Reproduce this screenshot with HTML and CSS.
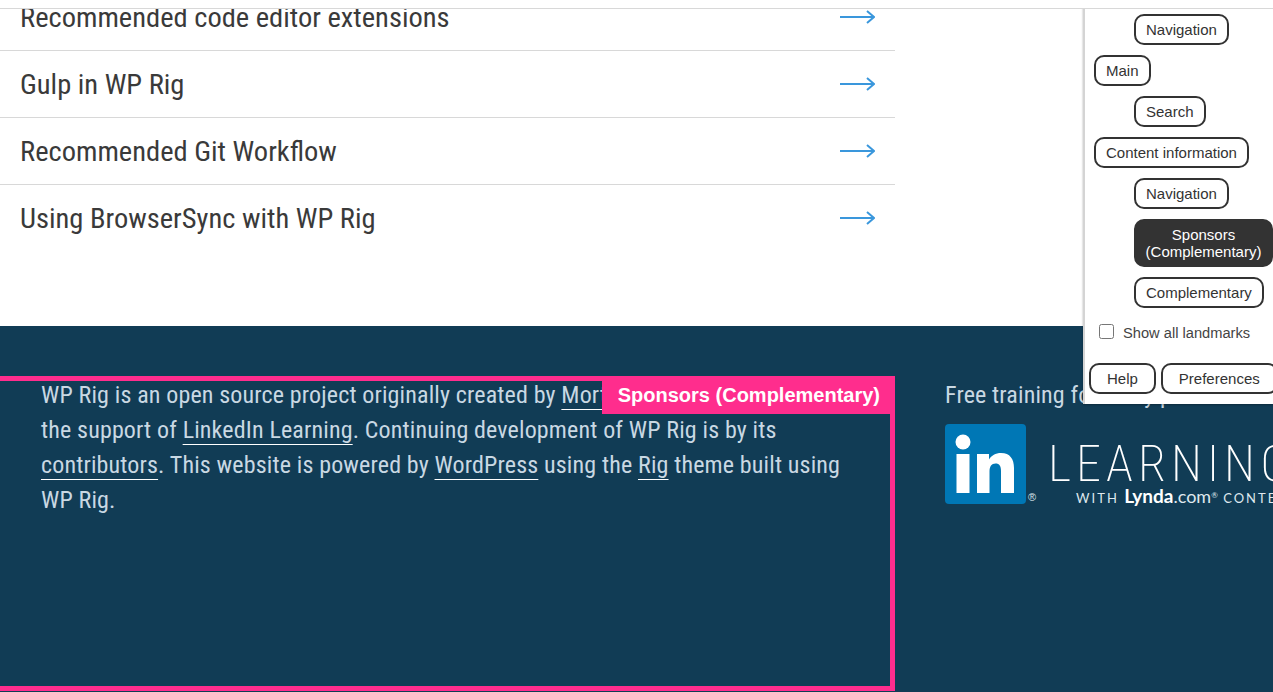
FILE: index.html
```html
<!DOCTYPE html>
<html lang="en">
<head>
<meta charset="UTF-8">
<title>WP Rig</title>
<link rel="stylesheet" href="styles.css">
</head>
<body>

<div class="topLine"></div>

<ul class="docList">
  <li class="docRow firstRow"><a>Recommended code editor extensions</a>
    <svg class="arrow" viewBox="0 0 36 14"><path d="M1 7H34M28 1L35 7L28 13"/></svg></li>
  <li class="docRow"><a>Gulp in WP Rig</a>
    <svg class="arrow" viewBox="0 0 36 14"><path d="M1 7H34M28 1L35 7L28 13"/></svg></li>
  <li class="docRow"><a>Recommended Git Workflow</a>
    <svg class="arrow" viewBox="0 0 36 14"><path d="M1 7H34M28 1L35 7L28 13"/></svg></li>
  <li class="docRow lastRow"><a>Using BrowserSync with WP Rig</a>
    <svg class="arrow" viewBox="0 0 36 14"><path d="M1 7H34M28 1L35 7L28 13"/></svg></li>
</ul>

<footer class="siteFooter">
  <div class="footerAbout">
    <p>WP Rig is an open source project originally created by <a>Morten Rand-Hendriksen</a><br>
    the support of <a>LinkedIn Learning</a>. Continuing development of WP Rig is by its<br>
    <a>contributors</a>. This website is powered by <a>WordPress</a> using the <a>Rig</a> theme built using<br>
    WP Rig.</p>
  </div>
  <div class="footerTraining">
    <p>Free training for every p</p>
    <div class="learningLogo">
      <svg class="inBadge" viewBox="0 0 81 80">
        <rect width="81" height="80" rx="4" fill="#0077b5"/>
        <circle cx="18" cy="18" r="7.5" fill="#fff"/>
        <rect x="11.500" y="30" width="13" height="39" fill="#fff"/>
        <path fill="#fff" d="M32 30H44V35.500C46.500 31.500 50.500 29 56 29C65 29 69 35 69 44V69H56V47C56 42 54.500 39.500 50.500 39.500C46.500 39.500 44.500 42.500 44.500 47V69H32Z"/>
      </svg>
      <span class="regMark">®</span>
      <div class="learningText">
        <div class="learningWord">LEARNING</div>
        <div class="learningSub">WITH <b>Lynda</b><span class="dotCom">.com</span><sup>®</sup> CONTENT</div>
      </div>
    </div>
  </div>
</footer>

<div class="landmarkBox">
  <div class="landmarkLabel">Sponsors (Complementary)</div>
</div>

<aside class="landmarksPanel">
  <div class="pillList">
    <button class="pill">Banner</button>
    <button class="pill nested">Navigation</button>
    <button class="pill">Main</button>
    <button class="pill nested">Search</button>
    <button class="pill">Content information</button>
    <button class="pill nested">Navigation</button>
    <button class="pill nested current">Sponsors<br>(Complementary)</button>
    <button class="pill nested">Complementary</button>
  </div>
  <label class="showAll"><input type="checkbox"> <span>Show all landmarks</span></label>
  <div class="panelButtons">
    <button class="pill">Help</button>
    <button class="pill prefs">Preferences</button>
  </div>
</aside>

</body>
</html>
```

FILE: styles.css
```css
body {
  margin: 0;
  height: 692px;
  overflow: hidden;
  position: relative;
  background-color: #fff;
  font-family: Roboto, "Liberation Sans", sans-serif;
  font-stretch: 75%;
}

.topLine {
  position: relative;
  z-index: 1;
  height: 8px;
  background-color: #fff;
  border-bottom: 1px solid #d8d8d8;
}

.docList {
  list-style: none;
  margin: 0 0 75px;
  padding: 0;
  width: 895px;
}
.docRow {
  height: 66px;
  display: flex;
  align-items: center;
  justify-content: space-between;
  padding: 0 20px;
  border-bottom: 1px solid #d8d8d8;
  font-size: 28.5px;
  color: #3a3a3a;
}
.docRow a {
  padding-top: 1px;
}
.firstRow {
  margin-top: -25px;
}
.lastRow {
  border-bottom: none;
}
.arrow {
  width: 36px;
  height: 14px;
}
.arrow path {
  fill: none;
  stroke: #3a97dc;
  stroke-width: 2;
}

.siteFooter {
  height: 366px;
  background-color: #113c55;
  display: flex;
  padding-top: 52px;
  box-sizing: border-box;
  color: #c9d8e3;
  font-size: 24px;
  letter-spacing: 0.15px;
  line-height: 35px;
}
.siteFooter p {
  margin: 0;
  white-space: nowrap;
}
.siteFooter a {
  text-decoration: underline 1px #fff;
  text-underline-offset: 6px;
  text-decoration-skip-ink: none;
}
.footerAbout {
  width: 854px;
  padding-left: 41px;
  box-sizing: border-box;
  margin-right: 91px;
  flex: none;
}
.footerTraining {
  flex: none;
}

.learningLogo {
  display: flex;
  margin-top: 11px;
}
.inBadge {
  width: 81px;
  height: 80px;
  flex: none;
}
.regMark {
  font-family: "Liberation Sans", sans-serif;
  font-size: 11px;
  letter-spacing: 0;
  line-height: 14px;
  margin: 66px 0 0 2px;
  color: #dbe5ec;
}
.learningText {
  margin-left: 12px;
  color: #fff;
  white-space: nowrap;
}
.learningWord {
  font-size: 50px;
  font-weight: 200;
  font-stretch: 85%;
  letter-spacing: 5px;
  line-height: 50px;
  margin-top: 15px;
}
.learningSub {
  font-family: Lato, sans-serif;
  font-size: 13px;
  letter-spacing: 2px;
  line-height: 18px;
  margin: -2px 0 0 28px;
  color: #dfe8ee;
}
.learningSub b {
  font-size: 19px;
  letter-spacing: 0;
  color: #fff;
}
.dotCom {
  font-size: 18px;
  letter-spacing: 0;
}
.learningSub sup {
  font-size: 8px;
  letter-spacing: 0;
  line-height: 0;
}

/* highlight over the sponsors landmark */
.landmarkBox {
  position: absolute;
  left: 0;
  top: 376px;
  width: 895px;
  height: 315px;
  box-sizing: border-box;
  border: 5px solid #ff2d8d;
  border-left: none;
}
.landmarkLabel {
  position: absolute;
  top: -5px;
  right: -5px;
  height: 38px;
  line-height: 38px;
  padding: 0 15px 0 16px;
  background-color: #ff2d8d;
  color: #fff;
  font-family: "Liberation Sans", sans-serif;
  font-size: 20px;
  font-stretch: normal;
  font-weight: bold;
  white-space: nowrap;
}

/* landmarks extension panel */
.landmarksPanel {
  position: absolute;
  left: 1083px;
  top: 0;
  width: 190px;
  height: 404px;
  box-sizing: border-box;
  background-color: #fff;
  border-left: 2px solid #d4d4d4;
  box-shadow: 0 1px 2px rgba(0, 0, 0, 0.3);
  font-family: "Liberation Sans", sans-serif;
  font-stretch: normal;
  font-size: 14.67px;
  overflow: hidden;
}
.pillList {
  display: flex;
  flex-direction: column;
  align-items: flex-start;
  gap: 10px;
  margin: -27px 0 0 9px;
}
.pill {
  box-sizing: border-box;
  height: 31px;
  padding: 0 10px;
  border: 2px solid #333;
  border-radius: 10px;
  background-color: #fff;
  color: #333;
  font-family: "Liberation Sans", sans-serif;
  font-size: 15px;
  line-height: 17px;
  white-space: nowrap;
}
.nested {
  margin-left: 40px;
}
.current {
  width: 139px;
  height: 48px;
  padding: 0;
  background-color: #333;
  color: #fff;
}
.showAll {
  display: flex;
  align-items: center;
  margin: 15px 0 0 14px;
  color: #444;
  height: 20px;
}
.showAll input {
  width: 15px;
  height: 15px;
  margin: 0 9px 3px 0;
}
.panelButtons {
  display: flex;
  gap: 5px;
  margin: 20px 0 0 4px;
}
.panelButtons .pill {
  padding: 0 16px;
  flex: none;
}
```
